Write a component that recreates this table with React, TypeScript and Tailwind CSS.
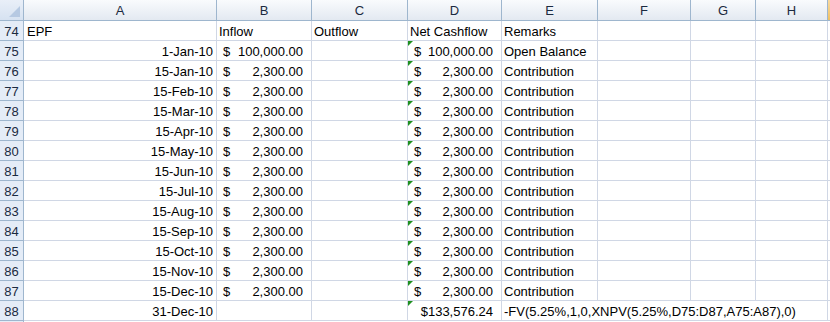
import React from "react";

const cols = ["A", "B", "C", "D", "E", "F", "G", "H"];

const months = ["Jan", "Feb", "Mar", "Apr", "May", "Jun", "Jul", "Aug", "Sep", "Oct", "Nov", "Dec"];

type Row = {
  n: number;
  date: string;
  inflow?: string;
  net?: string;
  remark?: string;
};

const rows: Row[] = [
  { n: 75, date: "1-Jan-10", inflow: "100,000.00", net: "100,000.00", remark: "Open Balance" },
  ...months.map((m, i) => ({
    n: 76 + i,
    date: `15-${m}-10`,
    inflow: "2,300.00",
    net: "2,300.00",
    remark: "Contribution",
  })),
];

const cell = "border-r border-b border-[#d0d7e5] h-5 leading-[22px] whitespace-nowrap overflow-hidden";
const rowHead =
  "border-r border-b border-[#9eb6ce] bg-[#e4ecf7] h-5 leading-[21px] text-center text-[#1b2a40]";

function Money({ v }: { v?: string }) {
  if (!v) return <div className={cell} />;
  return (
    <div className={`${cell} flex justify-between pl-[6px] pr-[8px]`}>
      <span>$</span>
      <span>{v}</span>
    </div>
  );
}

function Flag() {
  return (
    <span className="absolute left-0 top-0 w-0 h-0 border-t-[5px] border-r-[5px] border-t-[#1f8f1f] border-r-transparent" />
  );
}

export default function App() {
  return (
    <div
      className="w-[830px] h-[322px] bg-white overflow-hidden text-[13px] text-black"
      style={{ fontFamily: '"Liberation Sans", Arial, sans-serif' }}
    >
      <div className="grid grid-cols-[24px_193px_95px_96px_94px_96px_93px_65px_72px_2px]">
        {/* header row */}
        <div className="relative h-[21px] border-r border-b border-[#9eb6ce] bg-gradient-to-b from-[#e9eff8] to-[#d6e2f1]">
          <span
            className="absolute right-[3px] bottom-[3px] w-0 h-0"
            style={{ borderBottom: "11px solid #b6c9e2", borderLeft: "11px solid transparent" }}
          />
        </div>
        {cols.map((c) => (
          <div
            key={c}
            className="h-[21px] border-r border-b border-[#9eb6ce] bg-gradient-to-b from-[#f9fbfd] to-[#e3e9f1] text-center leading-[21px] text-[#1b2a40]"
          >
            {c}
          </div>
        ))}
        <div className="h-[21px] border-b border-[#9eb6ce] bg-gradient-to-b from-[#f9d99f] to-[#f1c15f]" />

        {/* row 74 */}
        <div className={rowHead}>74</div>
        <div className={`${cell} pl-[3px]`}>EPF</div>
        <div className={`${cell} pl-[2px]`}>Inflow</div>
        <div className={`${cell} pl-[2px]`}>Outflow</div>
        <div className={`${cell} pl-[2px]`}>Net Cashflow</div>
        <div className={`${cell} pl-[2px]`}>Remarks</div>
        <div className={cell} />
        <div className={cell} />
        <div className={cell} />
        <div className="h-5 border-b border-[#d0d7e5]" />

        {rows.map((r) => (
          <React.Fragment key={r.n}>
            <div className={rowHead}>{r.n}</div>
            <div className={`${cell} text-right pr-[3px]`}>{r.date}</div>
            <Money v={r.inflow} />
            <div className={cell} />
            <div className="relative">
              <Flag />
              <Money v={r.net} />
            </div>
            <div className={`${cell} pl-[2px]`}>{r.remark}</div>
            <div className={cell} />
            <div className={cell} />
            <div className={cell} />
            <div className="h-5 border-b border-[#d0d7e5]" />
          </React.Fragment>
        ))}

        {/* row 88 */}
        <div className={rowHead}>88</div>
        <div className={`${cell} text-right pr-[3px]`}>31-Dec-10</div>
        <div className={cell} />
        <div className={cell} />
        <div className={`${cell} relative text-right pr-[8px]`}>
          <Flag />
          $133,576.24
        </div>
        <div className={`${cell} col-span-4 pl-[2px]`}>-FV(5.25%,1,0,XNPV(5.25%,D75:D87,A75:A87),0)</div>
        <div className="h-5 border-b border-[#d0d7e5]" />

        <div className="h-5 border-r border-[#9eb6ce] bg-[#e4ecf7]" />
      </div>
    </div>
  );
}
